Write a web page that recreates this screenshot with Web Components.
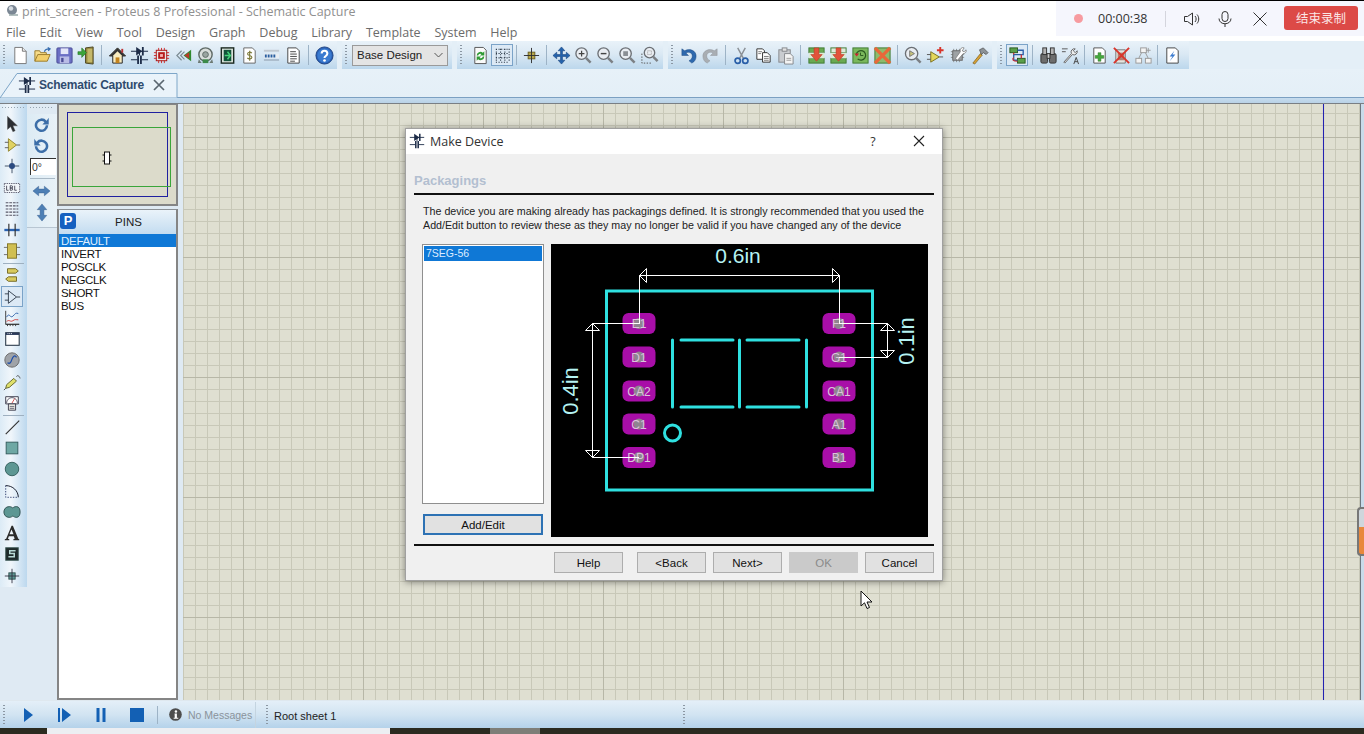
<!DOCTYPE html>
<html lang="en"><head><meta charset="utf-8"><title>Proteus</title>
<style>
html,body{margin:0;height:734px;width:1364px;overflow:hidden;background:#fff}
body{display:flex;flex-direction:column;font-family:"Liberation Sans",sans-serif;position:relative}
main-area{flex:none}
</style></head>
<body>
<title-bar>print_screen - Proteus 8 Professional - Schematic Capture</title-bar>
<menu-bar><span>File</span><span>Edit</span><span>View</span><span>Tool</span><span>Design</span><span>Graph</span><span>Debug</span><span>Library</span><span>Template</span><span>System</span><span>Help</span></menu-bar>
<tool-strip>
 <tool-group w="337"><x-icon n="new"></x-icon><x-icon n="open"></x-icon><x-icon n="save"></x-icon><x-icon n="import"></x-icon><tool-sep></tool-sep><x-icon n="home"></x-icon><x-icon n="schem"></x-icon><x-icon n="pcb"></x-icon><x-icon n="d3"></x-icon><x-icon n="gerber"></x-icon><x-icon n="bom"></x-icon><x-icon n="dollar"></x-icon><x-icon n="vsm"></x-icon><x-icon n="notes"></x-icon><tool-sep></tool-sep><x-icon n="help"></x-icon></tool-group>
 <tool-group w="110"><style-select>Base Design</style-select></tool-group>
 <tool-group w="206" style="padding-left:12px"><x-icon n="reload"></x-icon><x-icon n="grid" active></x-icon><tool-sep style="width:7px"></tool-sep><x-icon n="origin"></x-icon><tool-sep style="width:8px"></tool-sep><x-icon n="pan"></x-icon><x-icon n="zin"></x-icon><x-icon n="zout"></x-icon><x-icon n="zall"></x-icon><x-icon n="zarea"></x-icon></tool-group>
 <tool-group w="324"><x-icon n="undo"></x-icon><x-icon n="redo"></x-icon><tool-sep></tool-sep><x-icon n="cut"></x-icon><x-icon n="copy"></x-icon><x-icon n="paste"></x-icon><tool-sep></tool-sep><x-icon n="bcopy"></x-icon><x-icon n="bmove"></x-icon><x-icon n="brot"></x-icon><x-icon n="bdel"></x-icon><tool-sep></tool-sep><x-icon n="zlib"></x-icon><x-icon n="pick"></x-icon><x-icon n="mk"></x-icon><x-icon n="hammer"></x-icon></tool-group>
 <tool-group w="192"><x-icon n="net" active></x-icon><tool-sep></tool-sep><x-icon n="find"></x-icon><x-icon n="wrench"></x-icon><tool-sep style="width:7px"></tool-sep><x-icon n="nsheet"></x-icon><x-icon n="dsheet"></x-icon><x-icon n="hier"></x-icon><tool-sep style="width:7px"></tool-sep><x-icon n="bolt"></x-icon></tool-group>
</tool-strip>
<tab-row><doc-tab>Schematic Capture</doc-tab></tab-row>
<main-area>
 <mode-rail>
  <x-icon n="arrow" s></x-icon><x-icon n="comp" s></x-icon><x-icon n="junction" s></x-icon><x-icon n="lbl" s></x-icon><x-icon n="script" s></x-icon><x-icon n="bus" s></x-icon><x-icon n="sub" s></x-icon><rail-sep></rail-sep>
  <x-icon n="term" s></x-icon><x-icon n="pin" s active></x-icon><x-icon n="graph" s></x-icon><x-icon n="tape" s></x-icon><x-icon n="gen" s></x-icon><x-icon n="probe" s></x-icon><x-icon n="meter" s></x-icon><rail-sep></rail-sep>
  <x-icon n="line" s></x-icon><x-icon n="box" s></x-icon><x-icon n="circle" s></x-icon><x-icon n="arc" s></x-icon><x-icon n="path" s></x-icon><x-icon n="a" s></x-icon><x-icon n="sym" s></x-icon><x-icon n="mark" s></x-icon>
 </mode-rail>
 <orient-rail></orient-rail>
 <side-panels>
  <overview-pane></overview-pane>
  <pin-list><span sel>DEFAULT</span><span>INVERT</span><span>POSCLK</span><span>NEGCLK</span><span>SHORT</span><span>BUS</span></pin-list>
 </side-panels>
 <schematic-canvas></schematic-canvas>
</main-area>
<status-bar></status-bar>
<task-strip></task-strip>
<recorder-bar></recorder-bar>
<make-device></make-device>
<scroll-grip></scroll-grip>
<mouse-cursor></mouse-cursor>
<script>
const I={
new:'<path d="M4 1.500h8l4 4v13H4z" fill="#fff" stroke="#777"/><path d="M12 1.500v4h4" fill="#eee" stroke="#777"/>',
open:'<path d="M2 16V5h5l1 2h6v2" fill="#f6dc8a" stroke="#9a7a2a"/><path d="M2 16l3-7h13l-3 7z" fill="#f2cf6b" stroke="#9a7a2a"/><path d="M12 6c1-3 3-3 5-3m-1.500-1.500L18 3l-2 2" fill="none" stroke="#3a6fb0" stroke-width="1.300"/>',
save:'<rect x="2" y="2" width="16" height="16" rx="1" fill="#6b6fc4" stroke="#4a4c96"/><rect x="6" y="2.500" width="8" height="6" fill="#e4e6f8"/><rect x="5" y="11" width="10" height="7" fill="#b9bce6"/><rect x="6.500" y="12.500" width="2.500" height="4.500" fill="#4a4c96"/>',
import:'<path d="M9 2l8-1v18l-8-1z" fill="#9a8c42" stroke="#4b4520"/><path d="M11 3h5v14h-5z" fill="#c4b86a"/><path d="M1 6h4V2l5 5-5 5V9H1z" fill="#3aa53a" stroke="#1c6b1c" stroke-width=".6"/>',
home:'<path d="M10 2L1.500 10.500H5V18h10v-7.500h3.500z" fill="#f8ecc0" stroke="#222"/><path d="M10 2L1.500 10.500H5L10 5.500l5 5h3.500z" fill="#333"/><rect x="8" y="12" width="4" height="6" fill="#c2831e"/><rect x="14" y="3" width="2" height="4" fill="#b33"/>',
schem:'<path d="M1 5.500h18M10 5.500v4.500M1 14.500h7M12 14.500h7" stroke="#1d2c48" stroke-width="1.100" fill="none"/><path d="M6.500 1v9l6.500-4.500z" fill="#1d2c48"/><path d="M13.500 1v9M8.500 10v9M11.500 10v9" stroke="#1d2c48" stroke-width="1.900"/>',
pcb:'<path d="M7 2v16M10 2v16M13 2v16M2 7h16M2 10h16M2 13h16" stroke="#c33" stroke-width="1"/><rect x="4.500" y="4.500" width="11" height="11" fill="#e8e8e8" stroke="#a11"/><rect x="6.500" y="6.500" width="7" height="7" fill="#b71c1c"/><rect x="8.500" y="8.500" width="3" height="3" fill="#f3b0b0"/>',
d3:'<path d="M10 10l8-6v12z" fill="#2f8a2f"/><path d="M11 10l5-3.500v7z" fill="#b83a2a"/><path d="M8 5l-5 5 5 5M11 6l-4 4 4 4" fill="none" stroke="#7a8a90" stroke-width="1.200"/>',
gerber:'<circle cx="10" cy="9" r="7" fill="#d9dedb" stroke="#5f6a66" stroke-width="1.500"/><circle cx="10" cy="9" r="3" fill="#9aa5a0" stroke="#5f6a66"/><path d="M3 14l-1 4h4zM17 14l1 4h-4z" fill="#6d7a74"/><path d="M7 14h6v4H7z" fill="#3b8a4a"/>',
bom:'<rect x="3.500" y="2" width="13" height="16" fill="#dfe8e0" stroke="#1c2a22" stroke-width="1.500"/><rect x="6" y="4" width="8" height="12" fill="#12533a"/><path d="M7 10h6M10 6l3 4-3 4" fill="none" stroke="#45d37a" stroke-width="1.500"/>',
dollar:'<path d="M4 2h9l3 3v13H4z" fill="#fff" stroke="#666"/><path d="M12.500 7.500C11 6 8 6.200 8 8.300c0 2.200 4.500 1.200 4.500 3.500 0 2.200-3.200 2.200-4.800.800M10.200 5v10.500" fill="none" stroke="#7d7a3a" stroke-width="1.200"/>',
vsm:'<rect x="2" y="4" width="16" height="2" fill="#c0c8d0"/><rect x="2" y="8" width="16" height="5" fill="#e8edf2"/><path d="M3 9h2v3H3zM6 9h2v3H6zM9 9h2v3H9zM12 9h2v3h-2z" fill="#2a5fa0"/><rect x="2" y="14" width="16" height="1.500" fill="#9fb0c0"/>',
notes:'<path d="M4 2h9l3 3v13H4z" fill="#fff" stroke="#444"/><path d="M6.500 6h6M6.500 8.500h7M6.500 11h7M6.500 13.500h7M6.500 16h5" stroke="#444"/>',
help:'<circle cx="10" cy="10" r="9" fill="#2a62b8" stroke="#1b3f80"/><circle cx="10" cy="10" r="7.500" fill="#3b7bd0"/><path d="M7 8c0-4 6-4 6 0 0 2.500-3 2.500-3 4.500" fill="none" stroke="#fff" stroke-width="2.200"/><circle cx="10" cy="15.300" r="1.400" fill="#fff"/>',
reload:'<path d="M4 1.500h9l3 3v14H4z" fill="#fafafa" stroke="#555"/><path d="M6 10a4 4 0 0 1 6.500-3l1.500-1.500V10H9.500l1.500-1.500a2.500 2.500 0 0 0-3.500 1.500z" fill="#2f9a35"/><path d="M14 11a4 4 0 0 1-6.500 3L6 15.500V11h4.500L9 12.500a2.500 2.500 0 0 0 3.500-1.500z" fill="#2f9a35"/>',
grid:'<path d="M3 3.500h14M3 8h14M3 12.500h14M3 17h14M3.500 3v14M8 3v14M12.500 3v14M17 3v14" stroke="#2c3a48" stroke-width="1.100" stroke-dasharray="1.200 1.600" fill="none"/>',
origin:'<path d="M10 2v16M2 10h16" stroke="#333"/><rect x="6.500" y="6.500" width="7" height="7" fill="#b8a84a" stroke="#6c6020"/><path d="M10 5v10M5 10h10" stroke="#333"/>',
pan:'<path d="M10 1l3.500 4H11v4h4V6.500l4 3.500-4 3.500V11h-4v4h2.500L10 19l-3.500-4H9v-4H5v2.500L1 10l4-3.500V9h4V5H6.500z" fill="#2463ad" stroke="#153f78" stroke-width=".6"/>',
zin:'<circle cx="8" cy="8" r="6" fill="#e9edf2" stroke="#6b6f74" stroke-width="1.400"/><path d="M5 8h6M8 5v6" stroke="#444" stroke-width="1.300"/><path d="M12.500 12.500l5 5" stroke="#7c8085" stroke-width="2.600"/>',
zout:'<circle cx="8" cy="8" r="6" fill="#e9edf2" stroke="#6b6f74" stroke-width="1.400"/><path d="M5 8h6" stroke="#444" stroke-width="1.500"/><path d="M12.500 12.500l5 5" stroke="#7c8085" stroke-width="2.600"/>',
zall:'<circle cx="8" cy="8" r="6" fill="#e9edf2" stroke="#6b6f74" stroke-width="1.400"/><rect x="5.500" y="5.500" width="5" height="5" fill="#8a8f94"/><path d="M12.500 12.500l5 5" stroke="#7c8085" stroke-width="2.600"/>',
zarea:'<path d="M2 8v10h10" fill="none" stroke="#555" stroke-dasharray="1.500 1.500"/><circle cx="10" cy="7" r="5.500" fill="#e9edf2" stroke="#6b6f74" stroke-width="1.400"/><path d="M8 5h4v4h-4z" fill="none" stroke="#999" stroke-dasharray="1 1"/><path d="M14 11.500l4.500 4.500" stroke="#7c8085" stroke-width="2.600"/>',
undo:'<path d="M3 3v7h7L7.300 7.300C10 5.500 14 7 14 10.500c0 2.500-1.500 4-3.500 5l3 2.500c3-1.500 4.500-4 4.500-7.500C18 5 11.500 2 6 5z" fill="#2e69ae" stroke="#1e4a80" stroke-width=".5"/>',
redo:'<path d="M17 3v7h-7l2.700-2.700C10 5.500 6 7 6 10.500c0 2.500 1.500 4 3.500 5L6.500 18C3.500 16.500 2 14 2 10.500 2 5 8.500 2 14 5z" fill="#a9aeb3" stroke="#8e9398" stroke-width=".5"/>',
cut:'<path d="M6 2l6 11M14 2L8 13" stroke="#8a8f95" stroke-width="1.500"/><circle cx="6" cy="15.500" r="2.800" fill="none" stroke="#2a5fa8" stroke-width="1.800"/><circle cx="14" cy="15.500" r="2.800" fill="none" stroke="#2a5fa8" stroke-width="1.800"/>',
copy:'<path d="M3 3h6l2 2v9H3z" fill="#fff" stroke="#333"/><path d="M9 7h5l3 3v7H9z" fill="#fff" stroke="#333"/><path d="M4.500 6h4M4.500 8h3M10.500 11h5M10.500 13h5M10.500 15h5" stroke="#555" stroke-width=".8"/>',
paste:'<rect x="3" y="4" width="12" height="13" fill="#c9ccd0" stroke="#85888c"/><rect x="6.500" y="2" width="5" height="3.500" fill="#e3e3e3" stroke="#85888c"/><path d="M9 8h6l3 3v8H9z" fill="#f4f4f4" stroke="#85888c"/><path d="M11 13h5M11 15h5" stroke="#888" stroke-width=".8"/>',
bcopy:'<rect x="2" y="2" width="16" height="5" fill="#6aaa52" stroke="#3f7a33"/><rect x="2" y="13" width="16" height="5" fill="#6aaa52" stroke="#3f7a33"/><rect x="2" y="7" width="16" height="6" fill="#dcebd3"/><path d="M7.500 2h5v7H16l-6 7-6-7h3.500z" fill="#e2523a" stroke="#b8371f" stroke-width=".6"/>',
bmove:'<rect x="2" y="2" width="16" height="5" fill="#dfeada" stroke="#3f7a33"/><rect x="2" y="13" width="16" height="5" fill="#6aaa52" stroke="#3f7a33"/><rect x="2" y="7" width="16" height="6" fill="#dcebd3"/><path d="M7.500 2h5v7H16l-6 7-6-7h3.500z" fill="#e2523a" stroke="#b8371f" stroke-width=".6"/>',
brot:'<rect x="2" y="2" width="16" height="16" fill="#7ab85c" stroke="#3f7a33"/><path d="M5.500 9a5 5 0 1 1 1.500 4.500" fill="none" stroke="#2a5a20" stroke-width="1.300"/><path d="M3.500 8h5l-2.500 3z" fill="#c23"/><path d="M10 7v3h3" fill="none" stroke="#2a5a20"/>',
bdel:'<rect x="2" y="2" width="16" height="16" fill="#8dbb6e" stroke="#3f7a33"/><path d="M2 2l16 16M18 2L2 18" stroke="#e8683a" stroke-width="3.400"/>',
zlib:'<circle cx="8" cy="8" r="6.500" fill="#e9edf2" stroke="#6b6f74" stroke-width="1.400"/><path d="M6 5v6l5-3z" fill="#c9c47a" stroke="#777"/><path d="M12.500 12.500l5 5" stroke="#7c8085" stroke-width="2.600"/>',
pick:'<path d="M5 6v11l9-5.500z" fill="#e3d75a" stroke="#7a6f20"/><path d="M1 9h4M1 14h4M14 11.500h4" stroke="#555"/><path d="M15 1v7M11.500 4.500h7" stroke="#d8342a" stroke-width="2"/>',
mk:'<path d="M6 3v14M9 3v14M12 3v14M3 6h14M3 9h14M3 12h14" stroke="#8a8f90"/><rect x="5" y="5" width="10" height="10" fill="#9ea2a4" stroke="#666"/><path d="M17 2a3 3 0 0 0-4 4L8 13l2 2 6-7a3 3 0 0 0 3-4l-2 2-2-1z" fill="#fff" stroke="#777" stroke-width=".8"/>',
hammer:'<path d="M3 18L11 8l2 1.500L5 19z" fill="#d8a235" stroke="#7a5a18" stroke-width=".7"/><path d="M10 4l4-2 5 5-2 2-3-2-2 2z" fill="#8d9296" stroke="#444" stroke-width=".7"/>',
net:'<rect x="2" y="2" width="8" height="5" fill="#5aa04a" stroke="#2a5a20"/><rect x="10" y="13" width="8" height="5" fill="#5aa04a" stroke="#2a5a20"/><path d="M10 4.500h6v4.500H6v6h4" fill="none" stroke="#2a5fa8" stroke-width="1.400"/><path d="M6 7v2M14 9v4" stroke="#c33" stroke-width="1.400"/><path d="M6 12c-2 2-1 4 4 4" fill="none" stroke="#c33" stroke-width="1.200"/>',
find:'<rect x="2" y="8" width="7" height="10" rx="1.500" fill="#6d6d6d" stroke="#333"/><rect x="11" y="8" width="7" height="10" rx="1.500" fill="#6d6d6d" stroke="#333"/><rect x="4" y="2" width="4" height="7" fill="#b5b5b5" stroke="#333"/><rect x="12" y="2" width="4" height="7" fill="#b5b5b5" stroke="#333"/><rect x="8.500" y="8" width="3" height="5" fill="#ccc" stroke="#333"/>',
wrench:'<path d="M1 3h6M1 6h4" stroke="#555"/><path d="M3 17L11 8a3.500 3.500 0 0 1 4-5l-2 2 2 2 2-2a3.500 3.500 0 0 1-5 4l-8 9z" fill="#eee" stroke="#555" stroke-width=".9"/><path d="M13.500 19l2.500-7 2.500 7M14.500 16.500h3" fill="none" stroke="#444"/>',
nsheet:'<path d="M4 2h9l3 3v13H4z" fill="#fff" stroke="#555"/><path d="M8.500 7h3v3h3v3h-3v3h-3v-3h-3v-3h3z" fill="#45a83d" stroke="#2a6f25" stroke-width=".5"/>',
dsheet:'<path d="M4 4h10v14H4z" fill="#e5e5e0" stroke="#777"/><rect x="6" y="7" width="7" height="8" fill="#a05040" opacity=".7"/><path d="M2 2l16 16M18 2L2 18" stroke="#d9352b" stroke-width="2"/>',
hier:'<rect x="7" y="2" width="6" height="5" fill="#f4f4f4" stroke="#9a9a9a"/><rect x="2" y="13" width="6" height="5" fill="#f4f4f4" stroke="#9a9a9a"/><rect x="12" y="13" width="6" height="5" fill="#f4f4f4" stroke="#9a9a9a"/><path d="M8 7l-3 6M12 7l3 6" stroke="#9a9a9a"/><path d="M15 2v5M12.500 4.500h5" stroke="#9a9a9a"/>',
bolt:'<path d="M4 2h9l3 3v13H4z" fill="#fff" stroke="#444"/><path d="M12 5l-5 6h3l-3 5 6-7h-3z" fill="#3a7bd0"/>',
arrow:'<path d="M5 1.500V16l3.500-3 2.500 5.500 2.500-1L11 12h5z" fill="#2b2e33" stroke="#555" stroke-width=".5"/>',
comp:'<path d="M6 3v14l9-7z" fill="#e0d263" stroke="#8f8228"/><path d="M2 7h4M2 13h4M15 10h4" stroke="#555"/>',
junction:'<path d="M10 2v16M2 10h16" stroke="#34465c"/><circle cx="10" cy="10" r="3.300" fill="#2b4a80"/>',
lbl:'<rect x="1.500" y="5" width="17" height="10" fill="#f2f6fa" stroke="#556" stroke-dasharray="1.500 1"/><path d="M4 7.500v5h2.200M8 7.500v5h1.500a1.200 1.200 0 0 0 0-2.500H8h1.500a1.200 1.200 0 0 0 0-2.500zM13 7.500v5h2.200" fill="none" stroke="#334" stroke-width=".9"/>',
script:'<path d="M3 3h14M3 6.500h14M3 10h14M3 13.500h14M3 17h14" stroke="#556" stroke-width="1.200" stroke-dasharray="3 1"/>',
bus:'<path d="M1.500 10h17" stroke="#2a62b0" stroke-width="2.600"/><path d="M6.500 3v14M13.500 3v14" stroke="#333" stroke-width="1.300"/>',
sub:'<rect x="5" y="2" width="10" height="16" fill="#d0bf52" stroke="#7d7122"/><path d="M1 6h4M1 14h4M15 6h4M15 14h4" stroke="#666"/>',
term:'<path d="M5 3h9l3 2.500L14 8H5z" fill="#d8ca5e" stroke="#6f6520"/><path d="M15 12H6l-3 2.500L6 17h9z" fill="#d8ca5e" stroke="#6f6520"/>',
pin:'<path d="M6 3v14l9-7zM2 6.500h4M2 13.500h4M15 10h4" fill="none" stroke="#2c3846"/>',
graph:'<path d="M3 2v15h15" fill="none" stroke="#333"/><path d="M3 17h15M5 17v2M8 17v2M11 17v2M14 17v2" stroke="#333"/><path d="M4 9c3-6 4 2 7-1s3-4 6-3" fill="none" stroke="#2a5fa8"/><path d="M4 14c3-3 4 1 7-1s3-1 6-1" fill="none" stroke="#c33"/>',
tape:'<rect x="3" y="3" width="15" height="14" fill="#fff" stroke="#2b3a4a" stroke-width="1.200"/><rect x="3" y="3" width="15" height="2.500" fill="#2b3a5a"/><path d="M5 4h1M7 4h1M9 4h1" stroke="#fff"/>',
gen:'<circle cx="10" cy="10" r="8" fill="#9fa3a8" stroke="#666"/><path d="M5 13c3 2 4-1 5-4s3-5 5-2" fill="none" stroke="#1f4fa8" stroke-width="1.400"/>',
probe:'<path d="M3 17l1-4 8-7 3 3-8 7z" fill="#dfe06a" stroke="#5c5f28"/><path d="M1 19l2-2M15 4c1-2 3-1 4 2" fill="none" stroke="#444"/>',
meter:'<path d="M3 3h14v8H3z" fill="#fff" stroke="#334"/><path d="M4 10a6 6 0 0 1 12 0" fill="none" stroke="#556"/><path d="M10 10l3-5" stroke="#c44"/><path d="M6 11h8v7H6z" fill="#e8e8e0" stroke="#334"/><path d="M7.500 14h5M7.500 16h5" stroke="#667"/>',
line:'<path d="M3 18L18 3" stroke="#333" stroke-width="1.300"/>',
box:'<rect x="3.500" y="3.500" width="13" height="13" fill="#6ea8a4" stroke="#31595a"/>',
circle:'<circle cx="10" cy="10" r="7.500" fill="#5d9793" stroke="#2f5a58"/>',
arc:'<path d="M3 4c8 0 14 6 14 13" fill="none" stroke="#1a1f30" stroke-width="1.100"/><path d="M3 4v13h14" fill="none" stroke="#2a3a6a" stroke-dasharray="1.500 1.500"/>',
path:'<path d="M7 4c2 0 3 1 4 1.500 1-1 2-1.500 4-1.500 3 0 4 3 4 6s-1 6-4 6c-2 0-3-1-4-1.500-1 .5-2 1.500-4 1.500-4 0-6-3-6-6s2-6 6-6z" fill="#5d9793" stroke="#2f4f4f"/>',
a:'<path d="M2 18h5v-1l-1.500-.500 1-3h5.500l1 3L11.500 17v1H18v-1l-1-.500L11 2H9.500L3.500 16.500 2 17zM7.200 11.500L9.500 6l2.200 5.500z" fill="#2b2b2b"/>',
sym:'<rect x="3" y="3" width="14" height="14" fill="#1e2a2a" stroke="#44605e"/><path d="M14 6.500H7.500v3H12.500v3.500H6" fill="none" stroke="#b7d8d4" stroke-width="1.700"/>',
mark:'<path d="M10 2v16M2 10h16" stroke="#334"/><rect x="6.500" y="6.500" width="7" height="7" fill="#5d9793" stroke="#2f4f4f"/><path d="M10 6v8M6 10h8" stroke="#334"/>'
};
function def(name,css,html){customElements.define(name,class extends HTMLElement{constructor(){super();const r=this.attachShadow({mode:'open'});r.innerHTML='<style>'+css+'</style>'+(typeof html==='function'?html(this):html)}})}
customElements.define('x-icon',class extends HTMLElement{connectedCallback(){if(this.shadowRoot)return;const s=this.hasAttribute('s');const r=this.attachShadow({mode:'open'});const n=this.getAttribute('n');
 r.innerHTML=`<style>:host{display:flex;flex:none;align-items:center;justify-content:${s?'flex-start':'center'};box-sizing:border-box;width:${s?27:22}px;height:${s?21.25:22}px;padding-left:${s?1:0}px}
 :host([active]) div{background:#dce9f5;outline:1px solid #7ba3c8;outline-offset:-1px}
 div{display:flex;align-items:center;justify-content:center;width:22px;height:${s?21:22}px}svg{width:${s?18:19}px;height:${s?18:19}px;display:block}</style><div><svg viewBox="0 0 20 20">${I[n]||''}</svg></div>`}});
def('title-bar',':host{display:flex;align-items:center;box-sizing:border-box;height:21px;padding-bottom:1px;margin-top:1px;box-shadow:0 -1px 0 #000;color:#909090;font:12.500px "Open Sans",sans-serif;padding-left:22px;position:relative}svg{position:absolute;left:6px;top:3px}',
 '<svg width="14" height="14" viewBox="0 0 14 14"><circle cx="6" cy="6" r="5" fill="#7b8794"/><circle cx="5" cy="4.500" r="2.200" fill="#d4dae0"/><path d="M3 11h9" stroke="#9aa" stroke-width="1.500"/></svg><slot></slot>');
def('menu-bar',':host{display:flex;align-items:center;box-sizing:border-box;gap:13.800px;height:19px;padding:1px 0 0 6px;color:#6b6b6b;font:12.500px "Open Sans",sans-serif}','<slot></slot>');
def('tool-strip',':host{display:flex;gap:5px;height:28px;background:#e4eff7}','<slot></slot>');
customElements.define('tool-group',class extends HTMLElement{constructor(){super();const r=this.attachShadow({mode:'open'});r.innerHTML=`<style>:host{display:flex;align-items:center;box-sizing:border-box;width:${this.getAttribute('w')}px;height:28px;background:linear-gradient(#e9f2f9,#dbe9f4 45%,#bcd7ec);padding-left:9px;position:relative}
 i{position:absolute;left:3px;top:4px;width:2px;height:20px;background:repeating-linear-gradient(#8b97a3 0 1px,transparent 1px 3px)}</style><i></i><slot></slot>`}});
def('tool-sep',':host{display:block;flex:none;width:9px;height:20px}b{display:block;width:1px;height:100%;margin:0 auto;background:#9db3c6}','<b></b>');
def('style-select',':host{display:flex;align-items:center;justify-content:space-between;box-sizing:border-box;width:96px;height:21px;margin-left:1px;border:1px solid #9a9a9a;background:#e4e4e4;font:11.500px "Liberation Sans",sans-serif;color:#222;padding:0 4px}svg{flex:none}',
 '<slot></slot><svg width="9" height="6" viewBox="0 0 9 6"><path d="M.5 1l4 4 4-4" fill="none" stroke="#555"/></svg>');
def('tab-row',':host{display:block;box-sizing:border-box;height:35px;padding-top:4px;background:linear-gradient(#e7f1f8 0,#e4eff7 28px,#7ba0c2 28px,#7ba0c2 29px,#c6dcee 29px,#b9d2e7 34px,#7a7f84 34px)}','<slot></slot>');
def('doc-tab',':host{display:flex;align-items:center;box-sizing:border-box;width:178px;height:25px;padding:0 0 2px 18px;position:relative;font:bold 12px "Liberation Sans",sans-serif;color:#2f4b6e;letter-spacing:-.22px}svg.s{position:absolute;left:0;top:0}span{position:relative;display:flex;align-items:center;gap:3px}svg.c{margin-left:5px}',
 `<svg class="s" width="178" height="25" viewBox="0 0 178 25"><path d="M0 25L17 .5H177V24.500L178 25z" fill="#eaf3fa" stroke="#7ea6c8"/></svg><span><svg width="18" height="18" viewBox="0 0 20 20">${I.schem}</svg><slot></slot><svg class="c" width="14" height="14" viewBox="0 0 14 14"><path d="M2 2l10 10M12 2L2 12" stroke="#5a6670" stroke-width="1.700"/></svg></span>`);
def('main-area',':host{display:flex;height:596px;background:#dfeaf3}','<slot></slot>');
def('mode-rail',':host{display:flex;flex-direction:column;box-sizing:border-box;width:27px;height:483px;padding-top:9.300px;background:linear-gradient(90deg,#dcebf6,#f0f6fb 40%,#bcd8ee);position:relative}i{position:absolute;left:2px;right:2px;top:3px;height:1px;background:repeating-linear-gradient(90deg,#95a4b0 0 1px,transparent 1px 3px)}','<i></i><slot></slot>');
def('rail-sep',':host{display:block;flex:none;height:2.750px}b{display:block;height:1px;margin:1px 3px;background:#9eb0c0}','<b></b>');
def('orient-rail',':host{display:flex;flex-direction:column;align-items:stretch;box-sizing:border-box;width:30px;height:596px;padding-top:9.500px;position:relative}div.g{background:linear-gradient(90deg,#dcebf4,#e9f2f8);padding-bottom:4px;border-bottom:1px solid #b8c6d2}.ic{display:flex;justify-content:center;align-items:center;height:21.500px;width:29px}svg{display:block}input{display:block;box-sizing:border-box;width:26px;height:17px;margin:1px 0 3px 3px;border:0;border-left:1px solid #333;border-top:1px solid #333;background:#fff;font:10.500px "Liberation Sans",sans-serif;padding:1px 0 0 1px;color:#333}hr{border:0;border-top:1px solid #a9b9c6;margin:0 2px 2px 3px}i{position:absolute;left:3px;top:3px;width:24px;height:1px;background:repeating-linear-gradient(90deg,#95a4b0 0 1px,transparent 1px 3px)}',
 `<i></i><div class="g"><div class="ic"><svg width="17" height="17" viewBox="0 0 20 20"><path d="M16 5.500A8 8 0 1 0 18 11h-3a5 5 0 1 1-1.500-3.700L11 10h7.500V2z" fill="#3c6ea8"/></svg></div>
 <div class="ic"><svg width="17" height="17" viewBox="0 0 20 20"><path d="M4 5.500A8 8 0 1 1 2 11h3a5 5 0 1 0 1.500-3.700L9 10H1.500V2z" fill="#3c6ea8"/></svg></div>
 <input value="0°" aria-label="angle"><hr>
 <div class="ic" style="height:21px"><svg width="19" height="12" viewBox="0 0 20 12"><path d="M1 6l6-5v3h6V1l6 5-6 5V8H7v3z" fill="#4d7fb5" stroke="#3a6090" stroke-width=".5"/></svg></div>
 <div class="ic"><svg width="12" height="19" viewBox="0 0 12 20"><path d="M6 1l5 6H8v6h3l-5 6-5-6h3V7H1z" fill="#4d7fb5" stroke="#3a6090" stroke-width=".5"/></svg></div></div>`);
def('side-panels',':host{display:flex;flex-direction:column;flex:none;width:121px;gap:3px;margin-right:5px;box-sizing:border-box;height:596px}','<slot></slot>');
def('overview-pane',':host{display:block;box-sizing:border-box;height:102px;border:2px solid #858585;border-top-width:1px;background:#dcdbcb;padding:7px 0 0 8px;position:relative}.a{box-sizing:border-box;width:101px;height:85px;border:1px solid #2020a0;position:relative}.b{position:absolute;left:4px;top:14px;box-sizing:border-box;width:99px;height:60px;border:1px solid #3aa53a}svg{position:absolute;left:34px;top:38px}',
 '<div class="a"><div class="b"></div><svg width="10" height="15" viewBox="0 0 10 15"><rect x="2.500" y="1" width="5" height="12" fill="#fff" stroke="#111"/><path d="M.5 4h2M.5 10h2M7.500 4h2M7.500 10h2" stroke="#111"/></svg></div>');
def('pin-list',':host{display:flex;flex-direction:column;flex:1;box-sizing:border-box;border:2px solid #858585;border-top:1px solid #8a8f94;background:#fff}header{display:flex;align-items:center;height:24px;flex:none;background:linear-gradient(#eaf3fa,#c3dcf0);position:relative;justify-content:center;font:11.500px "Liberation Sans",sans-serif;color:#222;padding-left:22px;box-sizing:border-box}b{position:absolute;left:1px;top:3px;width:16px;height:16px;border-radius:3px;background:#1560c0;color:#fff;font:bold 13px/16px "Liberation Sans",sans-serif;text-align:center}.l{display:flex;flex-direction:column;font:11.500px/15px "Liberation Sans",sans-serif;letter-spacing:-.3px;color:#111}::slotted(span){display:block;height:13px;padding-left:2px}::slotted(span[sel]){background:#0f78d6;color:#dfefff}',
 '<header><b>P</b>PINS</header><div class="l"><slot></slot></div>');
def('schematic-canvas',`:host{display:block;position:relative;box-sizing:border-box;width:1181px;height:596px;background-color:#dfdfd1;
 background-image:linear-gradient(90deg,#b7b7a7 1.500px,transparent 1.500px),linear-gradient(#b7b7a7 1.500px,transparent 1.500px),linear-gradient(90deg,#c8c8b8 1px,transparent 1px),linear-gradient(#c8c8b8 1px,transparent 1px);
 background-size:120px 100%,100% 120px,12px 100%,100% 12px;background-position:60px 0,0 33px,0 0,0 9px;box-shadow:inset -3px 0 0 #c8dbea,inset -4px 0 0 #6d7880}
 i{position:absolute;left:1140px;top:0;bottom:0;width:1px;background:#2222b0;box-shadow:0 0 1px #a99ad0}`,'<i></i>');
def('status-bar',`:host{display:flex;align-items:center;height:28px;box-sizing:border-box;background:linear-gradient(#e4eff8,#d2e4f2 50%,#b4d2ea);position:relative;color:#222;font:11px "Liberation Sans",sans-serif;border-top:1px solid #dfe8ef}
 i{position:absolute;top:4px;width:2px;height:20px;background:repeating-linear-gradient(#8b97a3 0 1px,transparent 1px 3px)}
 svg{display:block}.row{display:flex;align-items:center;height:100%}.k{width:36px;display:flex;justify-content:center}.s{width:1px;height:18px;background:#9db3c6}`,
 `<i style="left:3px"></i><div class="row" style="padding-left:10px">
 <div class="k"><svg width="12" height="16" viewBox="0 0 12 16"><path d="M2 1l9 7-9 7z" fill="#1360b4"/></svg></div>
 <div class="k" style="width:37px"><svg width="15" height="16" viewBox="0 0 15 16"><path d="M1 1h2v14H1zM5 1l9 7-9 7z" fill="#1360b4"/></svg></div>
 <div class="k" style="width:35px"><svg width="12" height="16" viewBox="0 0 12 16"><path d="M1.500 1h3v14h-3zM7.500 1h3v14h-3z" fill="#1360b4"/></svg></div>
 <div class="k" style="width:37px"><svg width="14" height="14" viewBox="0 0 14 14"><rect width="14" height="14" fill="#1360b4"/></svg></div>
 <div class="s" style="margin:0 11px 0 2px"></div>
 <svg width="13" height="13" viewBox="0 0 14 14"><circle cx="7" cy="7" r="6.800" fill="#4d4d4d"/><circle cx="7.500" cy="3.800" r="1.300" fill="#fff"/><path d="M6 6h2.500v4.500H10v1H5v-1h1.200z" fill="#fff"/></svg>
 <span style="margin-left:6px;color:#8a939b;width:67px;font-size:10.500px;white-space:nowrap">No Messages</span>
 <b style="width:1px;height:26px;background:#c4d4e0;margin-right:18px"></b><span style="white-space:nowrap;padding-top:2px">Root sheet 1</span></div>
 <i style="left:266px"></i><i style="left:683px"></i>`);
def('task-strip',':host{display:flex;height:6px;background:#2b2b20}b{display:block;height:6px}','<b style="width:47px"></b><b style="width:343px;background:#eceef2"></b><b style="width:100px"></b><b style="width:50px;background:#7e7e78"></b>');
def('recorder-bar',`:host{position:absolute;left:1056px;top:1px;width:308px;height:35px;background:#f5f6fd;display:flex;align-items:center;box-sizing:border-box;padding-left:18px;font:12.500px "Open Sans",sans-serif;color:#333}
 u{width:9px;height:9px;border-radius:50%;background:#f79ba0;display:block;flex:none}span{margin-left:15px;width:52px;white-space:nowrap}q{quotes:none;display:block;width:1px;height:16px;background:#d4d5dd;margin:0 17px 0 15px}svg{display:block;flex:none}
 button{all:unset;box-sizing:border-box;width:74px;height:24px;margin:-1px 0 0 16px;background:#dc4a47;border-radius:3px;color:#fbe6e6;text-align:center;font:12.500px/24px "Noto Sans CJK SC",sans-serif}`,
 `<u></u><span>00:00:38</span><q></q>
 <svg width="18" height="18" viewBox="0 0 18 18"><path d="M1.500 6.500h3L9.500 3v12l-5-3.500h-3zM12 6c1.500 1.500 1.500 4.500 0 6M14 4.500c2.300 2.500 2.300 6.500 0 9" fill="none" stroke="#333"/></svg>
 <svg width="18" height="18" viewBox="0 0 18 18" style="margin-left:15px"><rect x="6" y="1.500" width="6" height="10" rx="3" fill="none" stroke="#333"/><path d="M3 8.500c0 7 12 7 12 0M9 14v3" fill="none" stroke="#333"/></svg>
 <svg width="16" height="16" viewBox="0 0 16 16" style="margin-left:18px"><path d="M1.500 1.500l13 13M14.500 1.500l-13 13" stroke="#333"/></svg>
 <button>结束录制</button>`);
def('wiz-button',':host{display:flex;align-items:center;justify-content:center;box-sizing:border-box;width:69px;height:21px;background:#e1e1e1;border:1px solid #adadad;font:11.500px "Liberation Sans",sans-serif;color:#111}:host([off]){background:#cacaca;border-color:#cacaca;color:#8a8a8a}:host([main]){width:120px;border:2px solid #2d72b4;height:21px;margin-left:1px}','<slot></slot>');
def('package-view',':host{display:block;width:377px;height:293px;background:#000;flex:none}svg{display:block}',()=>{
 const pads=[['E1',323.5],['D1',357],['CA2',391],['C1',424],['DP1',457.5]],rp=[['F1',323.5],['G1',357],['CA1',391],['A1',424],['B1',457.5]];
 const pad=(cx,cy,t)=>`<rect x="${cx-16.500}" y="${cy-10.500}" width="33" height="21" rx="6" fill="#a80ea8"/><circle cx="${cx}" cy="${cy}" r="5.500" fill="#8f8490"/><text x="${cx}" y="${cy+4.500}" text-anchor="middle" font-size="12" fill="#dcc4dc">${t}</text>`;
 const c='#2fe0e0';
 return `<svg width="377" height="293" viewBox="551 244 377 293" font-family="Liberation Sans">
 <rect x="606.500" y="291" width="266" height="199" fill="none" stroke="${c}" stroke-width="3"/>
 ${pads.map(p=>pad(639,p[1],p[0])).join('')}${rp.map(p=>pad(839,p[1],p[0])).join('')}
 <path d="M672.500 340v67M739.500 340v67M806.500 340v67M681 340h52M747 340h52M681 407h52M747 407h52" stroke="${c}" stroke-width="3" stroke-linecap="round" fill="none"/>
 <circle cx="672.500" cy="433" r="8" fill="none" stroke="${c}" stroke-width="3"/>
 <g fill="none" stroke="#fff"><path d="M639.500 324V275.500H839.500V324M639.500 275.500l7-7v14zM839.500 275.500l-7-7v14z"/>
 <path d="M639 323.500H592.500V457.500H639M592.500 323.500l-7 7h14zM592.500 457.500l-7-7h14z"/>
 <path d="M839 323.500H887.500V357.500H839M887.500 323.500l-7 7h14zM887.500 357.500l-7-7h14z"/></g>
 <g fill="#b5f2f2" font-size="21"><text x="738" y="263" text-anchor="middle">0.6in</text>
 <g font-size="22"><text transform="translate(578 391) rotate(-90)" text-anchor="middle">0.4in</text>
 <text transform="translate(914 341) rotate(-90)" text-anchor="middle">0.1in</text></g></g></svg>`});
def('make-device',`:host{position:absolute;left:405px;top:128px;width:538px;height:453px;box-sizing:border-box;display:flex;flex-direction:column;background:#f0f0f0;box-shadow:0 1px 7px rgba(0,0,0,.45);border:1px solid #a0a0a0;font:12px "Liberation Sans",sans-serif;color:#222}
 .t{display:flex;align-items:center;box-sizing:border-box;height:25px;flex:none;background:#fff;padding:0 0 1px 3px;font:12.500px "Open Sans",sans-serif;color:#333}.t span{margin-left:5px;flex:1}.t em{font-style:normal;width:44px;text-align:center}.t .x{width:47px;display:flex;justify-content:center}
 .b{flex:1;display:flex;flex-direction:column;padding:19px 8px 0 8px}h2{margin:0;font:bold 13px/15px "Liberation Sans",sans-serif;color:#b3bfd0;height:20px}
 .r{height:1.500px;background:#111;flex:none}p{margin:9px 0 0 9px;font-size:10.700px;line-height:14px;height:40.500px;white-space:nowrap}
 .m{display:flex;gap:7px;margin-left:8px;height:293px}.c{display:flex;flex-direction:column;width:122px}
 .lb{box-sizing:border-box;height:260px;border:1px solid #8f8f8f;background:#fff;padding:1px;margin-bottom:10px}.lb div{background:#0f78d6;color:#dcecff;font-size:10.500px;line-height:15px;padding-left:2px}
 .r2{margin-top:7px}.f{display:flex;justify-content:flex-end;gap:7px;margin-top:6.500px}.f wiz-button:nth-child(1){margin-right:7px}`,
 `<div class="t"><svg width="16" height="16" viewBox="0 0 20 20">${I.schem}</svg><span>Make Device</span><em>?</em><div class="x"><svg width="12" height="12" viewBox="0 0 12 12"><path d="M1 1l10 10M11 1L1 11" stroke="#222" stroke-width="1.100"/></svg></div></div>
 <div class="b"><h2>Packagings</h2><div class="r"></div>
 <p>The device you are making already has packagings defined. It is strongly recommended that you used the<br>Add/Edit button to review these as they may no longer be valid if you have changed any of the device</p>
 <div class="m"><div class="c"><div class="lb"><div>7SEG-56</div></div><wiz-button main>Add/Edit</wiz-button></div><package-view></package-view></div>
 <div class="r r2"></div>
 <div class="f"><wiz-button>Help</wiz-button><wiz-button>&lt;Back</wiz-button><wiz-button>Next&gt;</wiz-button><wiz-button off>OK</wiz-button><wiz-button>Cancel</wiz-button></div></div>`);
def('scroll-grip',':host{position:absolute;left:1357px;top:507px;width:7px;height:49px;box-sizing:border-box;border:2px solid #777;border-right:0;border-radius:4px 0 0 4px;background:linear-gradient(#cfd6dc 40%,#e8883c 40%)}','');
def('mouse-cursor',':host{position:absolute;left:860px;top:590px;width:14px;height:20px}svg{display:block}','<svg width="14" height="20" viewBox="0 0 14 20"><path d="M1 1v15l3.500-3.200L7 18.500l2.500-1L7 12h5z" fill="#fff" stroke="#111"/></svg>');
</script>
</body></html>
